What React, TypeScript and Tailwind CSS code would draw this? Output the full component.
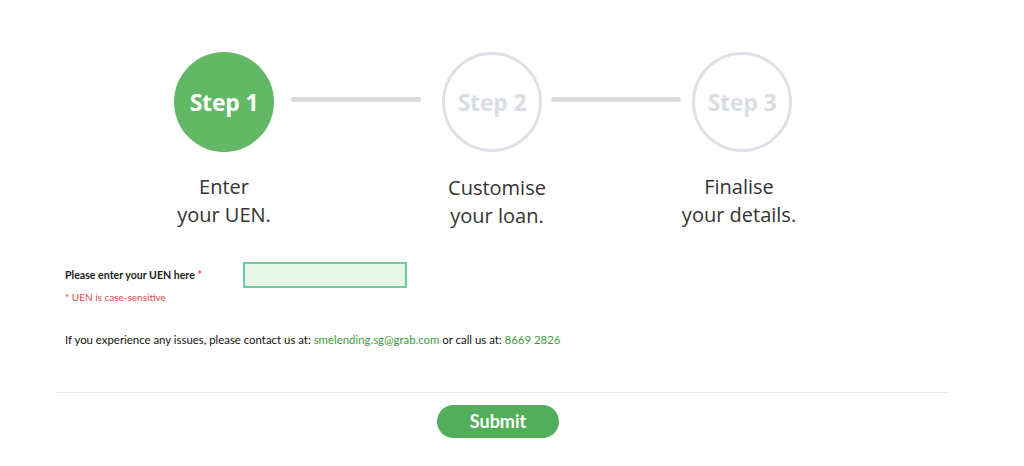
import React from "react";

function Circle({ label, active, className }: { label: string; active?: boolean; className?: string }) {
  return (
    <div
      className={
        "flex h-[100px] w-[100px] shrink-0 items-center justify-center rounded-full " +
        (active
          ? "bg-[#62b865] text-white"
          : "border-[3px] border-[#dde1e7] text-[#d9dee5]") +
        " " +
        (className ?? "")
      }
    >
      <span className="text-[23px] font-bold tracking-[-0.2px] [font-family:'Open_Sans',sans-serif]">{label}</span>
    </div>
  );
}

function Line({ className }: { className?: string }) {
  return <div className={"h-[5px] w-[130px] shrink-0 rounded-full bg-[#dcdcdc] " + (className ?? "")} />;
}

export default function App() {
  return (
    <div className="h-[466px] w-[1024px] bg-white [font-family:Lato,'Liberation_Sans',sans-serif]">
      <div className="flex items-center pl-[174px] pt-[52px]">
        <Circle label="Step 1" active />
        <Line className="ml-[17px] -mt-[6px]" />
        <Circle label="Step 2" className="ml-[21px] h-[99px] w-[99px]" />
        <Line className="ml-[9px] -mt-[6px]" />
        <Circle label="Step 3" className="ml-[11px] h-[97px] w-[97px]" />
      </div>

      <div className="relative mt-[21px] h-[60px] text-[20px] leading-[28px] text-[#333] [font-family:'Open_Sans',sans-serif]">
        <div className="absolute left-[124px] top-0 w-[200px] text-center">
          Enter
          <br />
          your UEN.
        </div>
        <div className="absolute left-[397px] top-[1px] w-[200px] text-center">
          Customise
          <br />
          your loan.
        </div>
        <div className="absolute left-[639px] top-0 w-[200px] text-center">
          Finalise
          <br />
          your details.
        </div>
      </div>

      <div className="mt-[30px] flex pl-[65px]">
        <div className="w-[178px]">
          <div className="mt-[5px] text-[10.6px] font-bold text-[#222]">
            Please enter your UEN here <span className="text-[#e5484d]">*</span>
          </div>
          <div className="mt-[6px] text-[10px] text-[#e5484d]">* UEN is case-sensitive</div>
        </div>
        <input className="-mt-[1px] h-[26px] w-[164px] border-[2px] border-[#6fc9a1] bg-[#e6f7e9] outline-none" />
      </div>

      <div className="mt-[26px] pl-[65px] text-[11.4px] text-[#111]">
        If you experience any issues, please contact us at:{" "}
        <span className="text-[#3e9b3e]">smelending.sg@grab.com</span> or call us at:{" "}
        <span className="text-[#3e9b3e]">8669 2826</span>
      </div>

      <div className="mx-[56px] mt-[44px] h-px w-[892px] bg-[#ececec]" />

      <div className="mt-[12px] flex justify-center pr-[28px]">
        <button className="flex h-[33px] w-[122px] items-center justify-center rounded-full bg-[#52ae5a] text-[18px] font-bold text-white">
          Submit
        </button>
      </div>
    </div>
  );
}
